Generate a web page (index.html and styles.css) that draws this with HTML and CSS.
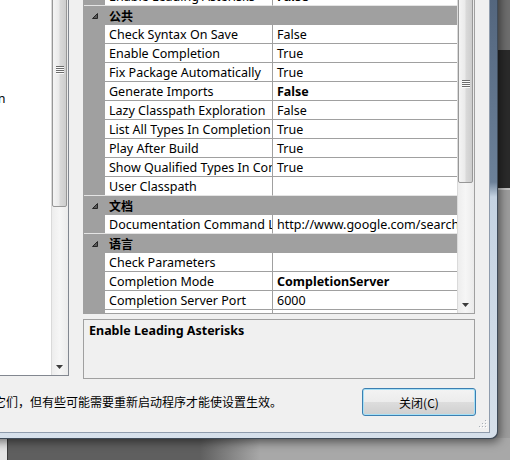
FILE: index.html
```html
<!DOCTYPE html>
<html>
<head>
<meta charset="utf-8">
<title>选项</title>
<link rel="stylesheet" href="styles.css">
</head>
<body>
<div class="desktop">
  <div class="window">
    <div class="client">
      <div class="main">
        <div class="nav">
          <ul class="nav-list">
            <li>环境</li>
            <li class="l1">常规</li>
            <li class="l1">字体和颜色</li>
            <li>文本编辑器</li>
            <li class="l1">常规</li>
            <li class="l1">Go</li>
            <li class="l2">Code Completion</li>
            <li class="l2">格式化</li>
            <li class="l1">XML</li>
            <li>项目</li>
          </ul>
          <div class="vscroll nav-scroll">
            <div class="sb-btn"><svg width="7" height="4" viewBox="0 0 7 4"><polygon points="0,4 7,4 3.5,0" fill="#3c3c3c"/></svg></div>
            <div class="thumb"><span class="grip"></span></div>
            <div class="track"></div>
            <div class="sb-btn"><svg width="7" height="4" viewBox="0 0 7 4"><polygon points="0,0 7,0 3.5,4" fill="#3c3c3c"/></svg></div>
          </div>
        </div>
        <div class="props">
          <div class="grid">
            <div class="rows">
              <div class="row"><span class="mg"></span><span class="name">Enable Auto Completion</span><span class="val">True</span></div>
              <div class="row end"><span class="mg"></span><span class="name">Enable Leading Asterisks</span><span class="val mod">False</span></div>
              <div class="cat"><span class="mg"><svg class="tri" width="6" height="6" viewBox="0 0 6 6"><polygon points="5.5,0.5 5.5,5.5 0.5,5.5" fill="#5a5a5a" stroke="#262626" stroke-width="1"/></svg></span><span class="label">公共</span></div>
              <div class="row"><span class="mg"></span><span class="name">Check Syntax On Save</span><span class="val">False</span></div>
              <div class="row"><span class="mg"></span><span class="name">Enable Completion</span><span class="val">True</span></div>
              <div class="row"><span class="mg"></span><span class="name">Fix Package Automatically</span><span class="val">True</span></div>
              <div class="row"><span class="mg"></span><span class="name">Generate Imports</span><span class="val mod">False</span></div>
              <div class="row"><span class="mg"></span><span class="name">Lazy Classpath Exploration</span><span class="val">False</span></div>
              <div class="row"><span class="mg"></span><span class="name">List All Types In Completion</span><span class="val">True</span></div>
              <div class="row"><span class="mg"></span><span class="name">Play After Build</span><span class="val">True</span></div>
              <div class="row"><span class="mg"></span><span class="name">Show Qualified Types In Completion</span><span class="val">True</span></div>
              <div class="row end"><span class="mg"></span><span class="name">User Classpath</span><span class="val"></span></div>
              <div class="cat"><span class="mg"><svg class="tri" width="6" height="6" viewBox="0 0 6 6"><polygon points="5.5,0.5 5.5,5.5 0.5,5.5" fill="#5a5a5a" stroke="#262626" stroke-width="1"/></svg></span><span class="label">文档</span></div>
              <div class="row end"><span class="mg"></span><span class="name">Documentation Command Line</span><span class="val">http://www.google.com/search?q=%s</span></div>
              <div class="cat"><span class="mg"><svg class="tri" width="6" height="6" viewBox="0 0 6 6"><polygon points="5.5,0.5 5.5,5.5 0.5,5.5" fill="#5a5a5a" stroke="#262626" stroke-width="1"/></svg></span><span class="label">语言</span></div>
              <div class="row"><span class="mg"></span><span class="name">Check Parameters</span><span class="val"></span></div>
              <div class="row"><span class="mg"></span><span class="name">Completion Mode</span><span class="val mod">CompletionServer</span></div>
              <div class="row"><span class="mg"></span><span class="name">Completion Server Port</span><span class="val">6000</span></div>
              <div class="row"><span class="mg"></span><span class="name">Format Code On Save</span><span class="val">True</span></div>
            </div>
            <div class="vscroll grid-scroll">
              <div class="sb-btn"><svg width="7" height="4" viewBox="0 0 7 4"><polygon points="0,4 7,4 3.5,0" fill="#3c3c3c"/></svg></div>
              <div class="thumb"><span class="grip"></span></div>
              <div class="track"></div>
              <div class="sb-btn"><svg width="7" height="4" viewBox="0 0 7 4"><polygon points="0,0 7,0 3.5,4" fill="#3c3c3c"/></svg></div>
            </div>
          </div>
          <div class="desc">Enable Leading Asterisks</div>
        </div>
      </div>
      <div class="footer">
        <p class="note">更改设置后，系统会立即应用它们，但有些可能需要重新启动程序才能使设置生效。</p>
        <button class="btn">关闭(C)</button>
      </div>
      <span class="size-grip"><svg width="10" height="10" viewBox="0 0 10 10"><g fill="#ffffff"><rect x="9" y="1" width="1" height="1"/><rect x="6" y="4" width="1" height="1"/><rect x="9" y="4" width="1" height="1"/><rect x="3" y="7" width="1" height="1"/><rect x="6" y="7" width="1" height="1"/><rect x="9" y="7" width="1" height="1"/></g><g fill="#a9b0b8"><rect x="8" y="0" width="1" height="1"/><rect x="5" y="3" width="1" height="1"/><rect x="8" y="3" width="1" height="1"/><rect x="2" y="6" width="1" height="1"/><rect x="5" y="6" width="1" height="1"/><rect x="8" y="6" width="1" height="1"/></g></svg></span>
    </div>
  </div>
</div>
</body>
</html>
```
FILE: styles.css
```css
* { box-sizing: border-box; }
html, body { margin: 0; padding: 0; }
body {
  width: 510px;
  height: 460px;
  overflow: hidden;
  font-family: "Noto Sans", "Noto Sans CJK SC", sans-serif;
  font-size: 12.5px;
  color: #000;
}
.desktop {
  position: relative;
  width: 510px;
  height: 460px;
  overflow: hidden;
  background:
    linear-gradient(to bottom, #6e6e6e 0 50px, #2a2a2a 50px 188px, #c4c4c4 188px 190px, #9d9d9d 190px 438px, transparent 438px),
    linear-gradient(to right, #e4e4e4 0 7px, #3a3a3a 7px 8px, #5f5f5f 8px 200px, #a8a8a8 260px);
}
.window {
  position: absolute;
  left: -170px;
  top: -33px;
  width: 667px;
  height: 471px;
  padding: 0 8px 6px 0;
  border-bottom-right-radius: 7px;
  background: linear-gradient(to bottom, #4f6179 0, #6c8199 215px, #c5d3e2 230px, #d6e0eb 100%);
  box-shadow: 1px 1px 0 #3f4b59, 3px 4px 10px rgba(0, 0, 0, 0.5);
}
.client {
  position: relative;
  width: 659px;
  height: 465px;
  background: #f0f0f0;
  display: flex;
  flex-direction: column;
  box-shadow: 0 0 0 1px #8f9cad;
}
.main {
  display: flex;
  align-items: flex-start;
  gap: 14px;
  height: 412px;
  padding-left: 8px;
}
.nav {
  width: 231px;
  height: 409px;
  display: flex;
  background: #fff;
  border-right: 1px solid #828790;
  border-bottom: 1px solid #828790;
}
.nav-list {
  flex: 1;
  list-style: none;
  margin: 0;
  padding: 15px 0 0 4px;
  line-height: 18px;
  white-space: nowrap;
  overflow: hidden;
}
.nav-list .l1 { padding-left: 20px; }
.nav-list .l2 { padding-left: 62px; }

.vscroll {
  width: 17px;
  flex: none;
  display: flex;
  flex-direction: column;
  background: linear-gradient(to right, #dadada 0 1px, #ededed 1px, #f6f6f6 50%, #ebebeb);
}
.sb-btn {
  height: 17px;
  flex: none;
  display: flex;
  align-items: center;
  justify-content: center;
}
.sb-btn svg { display: block; }
.thumb {
  flex: none;
  margin: 0 1px;
  border: 1px solid #979797;
  border-radius: 2px;
  background: linear-gradient(to right, #f4f4f4, #eaeaea 45%, #d9d9d9 55%, #cdcdcd);
  display: flex;
  align-items: center;
  justify-content: center;
}
.grip {
  width: 8px;
  height: 8px;
  background: repeating-linear-gradient(to bottom, #6b6b6b 0 1px, #fbfbfb 1px 2px);
}
.track { flex: 1; }
.nav-scroll .thumb { height: 223px; padding-bottom: 51px; }
.grid-scroll .thumb { height: 198px; }

.props {
  width: 392px;
  display: flex;
  flex-direction: column;
  gap: 5px;
}
.grid {
  height: 347px;
  display: flex;
  border: 1px solid #a0a0a0;
  background: #fff;
}
.rows {
  flex: 1;
  overflow: hidden;
}
.row {
  display: grid;
  grid-template-columns: 21px 168px 184px;
  height: 19px;
}
.row > * {
  border-bottom: 1px solid #a0a0a0;
  padding-top: 1px;
  line-height: 18px;
  white-space: nowrap;
  overflow: hidden;
}
.mg { background: #a0a0a0; }
.name {
  border-right: 1px solid #a0a0a0;
  padding-left: 4px;
}
.val { padding-left: 4px; }
.mod { font-weight: 700; }
.row.end > * { border-bottom-color: #e4e4e4; }
.cat {
  display: grid;
  grid-template-columns: 21px 1fr;
  height: 19px;
  background: #a0a0a0;
  align-items: center;
}
.cat .mg {
  height: 19px;
  display: flex;
  align-items: center;
  padding-left: 8px;
}
.tri { display: block; }
.label {
  padding-left: 4px;
  font-family: "Noto Sans CJK SC", sans-serif;
  font-size: 12px;
  font-weight: 700;
  line-height: 18px;
}
.desc {
  height: 60px;
  border: 1px solid #a0a0a0;
  padding: 3px 0 0 5px;
  font-weight: 700;
  line-height: 16px;
}
.footer {
  flex: 1;
  display: flex;
  align-items: flex-start;
  padding: 9px 13px 0 8px;
}
.note {
  flex: 1;
  margin: 0;
  font-family: "Noto Sans CJK SC", sans-serif;
  font-size: 12px;
  line-height: 28px;
  white-space: nowrap;
  overflow: hidden;
}
.btn {
  width: 114px;
  height: 28px;
  flex: none;
  padding: 0;
  border: 1px solid #3c7fb1;
  border-radius: 3px;
  background: linear-gradient(to bottom, #f3f3f3 0%, #ececec 50%, #dddddd 50%, #cfcfcf 100%);
  box-shadow: inset 0 0 0 1px #a6e0f6;
  font-family: "Noto Sans CJK SC", sans-serif;
  font-size: 12px;
  color: #000;
}
.size-grip {
  position: absolute;
  right: 2px;
  bottom: 2px;
  width: 10px;
  height: 10px;
}
.size-grip svg { display: block; }
```
